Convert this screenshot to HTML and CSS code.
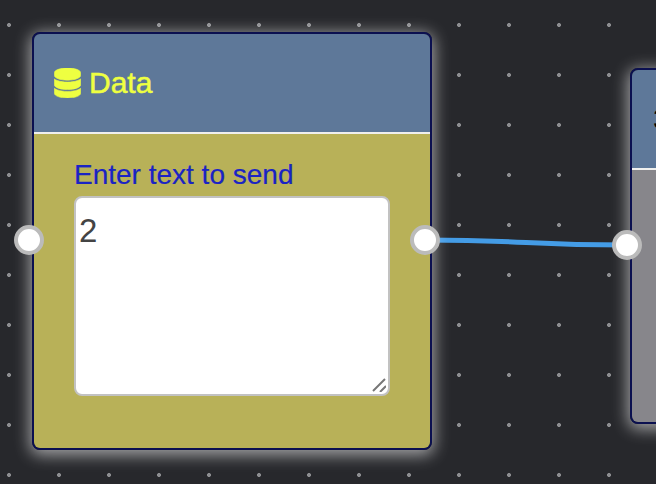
FILE: index.html
```html
<!DOCTYPE html>
<html lang="en">
<head>
<meta charset="utf-8">
<title>Flow</title>
<link rel="stylesheet" href="styles.css">
</head>
<body>
<main class="canvas">
  <svg class="edge" width="656" height="484" viewBox="0 0 656 484" aria-hidden="true">
    <path d="M425 240 C 526 240, 526 245, 627 245" />
  </svg>
  <section class="node node-data">
    <header class="node-head">
      <svg class="db-icon" viewBox="0 0 448 512" aria-hidden="true"><path d="M448 80v48c0 44.200-100.300 80-224 80S0 172.200 0 128V80C0 35.800 100.300 0 224 0S448 35.800 448 80zM393.200 214.700c20.800-7.400 39.900-16.900 54.800-28.600V288c0 44.200-100.300 80-224 80S0 332.200 0 288V186.100c14.900 11.800 34 21.200 54.800 28.600C99.700 230.700 159.500 240 224 240s124.300-9.300 169.200-25.300zM0 346.100c14.900 11.800 34 21.200 54.800 28.600C99.700 390.700 159.500 400 224 400s124.300-9.300 169.200-25.300c20.800-7.400 39.900-16.900 54.800-28.600V432c0 44.200-100.300 80-224 80S0 476.200 0 432V346.100z"/></svg>
      <span class="node-title">Data</span>
    </header>
    <div class="node-body">
      <label class="field-label" for="send">Enter text to send</label>
      <div class="field">
        <div class="field-value" id="send">2</div>
        <svg class="grip" width="14" height="14" viewBox="0 0 14 14" aria-hidden="true"><path d="M1 13 L13 1 M8 14 L14 8"/></svg>
      </div>
    </div>
  </section>
  <section class="node node-next">
    <header class="node-head next-head"><span class="next-title">3</span></header>
    <div class="next-body"></div>
  </section>
  <span class="port port-a"></span>
  <span class="port port-b"></span>
  <span class="port port-c"></span>
</main>
</body>
</html>
```
FILE: styles.css
```css
html, body { margin: 0; padding: 0; }
body { width: 656px; height: 484px; overflow: hidden; font-family: "Liberation Sans", Arial, sans-serif; }
.canvas {
  position: relative;
  width: 656px;
  height: 484px;
  overflow: hidden;
  background-color: #27282c;
  background-image: radial-gradient(circle at 9px 25px, #8d8e91 1.6px, transparent 2.3px);
  background-size: 50px 50px;
}
.node {
  position: absolute;
  box-sizing: border-box;
  display: flex;
  flex-direction: column;
  border: 2px solid #0b1050;
  border-radius: 8px;
  overflow: hidden;
  box-shadow: 0 3px 16px 2px rgba(255, 255, 255, 0.58);
}
.node-data { left: 32px; top: 32px; width: 400px; height: 418px; }
.node-next { left: 630px; top: 68px; width: 400px; height: 356px; }
.node-head {
  box-sizing: border-box;
  height: 100px;
  flex: none;
  display: flex;
  align-items: center;
  gap: 8px;
  padding: 0 0 0 20px;
  background: #5e7899;
  border-bottom: 2px solid #f0f0ee;
}
.db-icon { width: 27px; height: 30px; fill: #eeff41; stroke: #eeff41; stroke-width: 10px; flex: none; }
.node-title { color: #eeff41; font-size: 30px; line-height: 34px; -webkit-text-stroke: 0.5px #eeff41; }
.node-body { flex: 1; background: #b8b158; padding: 22px 40px 0; }
.field-label { display: block; color: #1a23c4; font-size: 28px; line-height: 38px; -webkit-text-stroke: 0.2px #1a23c4; }
.field {
  position: relative;
  box-sizing: border-box;
  width: 316px;
  height: 200px;
  margin-top: 2px;
  background: #fff;
  border: 2px solid #c2c2c2;
  border-radius: 8px;
}
.field-value { color: #444; font-size: 33px; line-height: 36px; padding: 15px 3px 0; }
.grip { position: absolute; right: 2px; bottom: 2px; fill: none; stroke: #777; stroke-width: 2px; }
.next-head { padding-left: 21px; }
.next-title { color: #000; font-size: 30px; }
.next-body { flex: 1; background: #87868b; }
.edge { position: absolute; left: 0; top: 0; }
.edge path { fill: none; stroke: #449ce6; stroke-width: 5px; }
.port {
  position: absolute;
  box-sizing: border-box;
  width: 30px;
  height: 30px;
  border-radius: 50%;
  background: #fff;
  border: 4px solid #bbb;
}
.port-a { left: 14px; top: 225px; }
.port-b { left: 410px; top: 225px; }
.port-c { left: 612px; top: 230px; }
```
